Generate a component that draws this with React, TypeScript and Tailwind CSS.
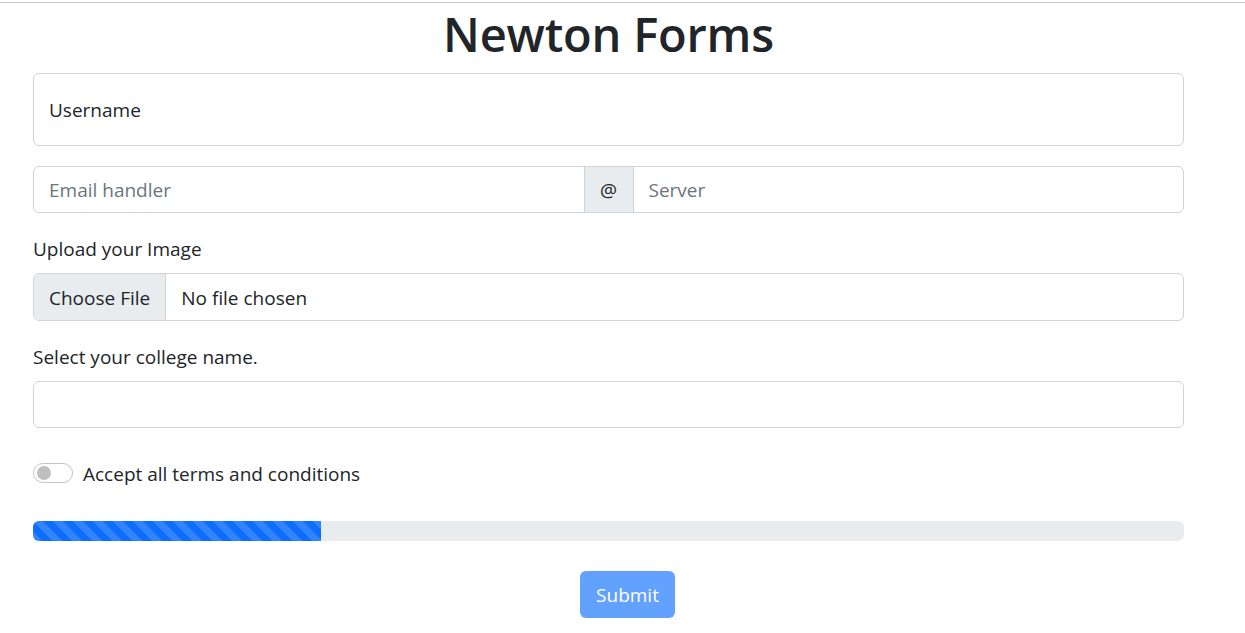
import React from "react";

export default function App() {
  return (
    <div className="min-h-screen bg-white text-[#212529] font-['Open_Sans','Noto_Sans',sans-serif]">
      <div className="pt-[2px]">
        <div className="h-px bg-[#c6c6c6]" />
      </div>
      <div className="ml-[33px] w-[1151px]">
        <h1 className="h-[60px] mb-[10px] pt-[1px] text-center text-[47px] leading-[60px] font-semibold tracking-[-0.2px]">
          Newton Forms
        </h1>

        <div className="h-[73px] mb-[20px] flex items-center rounded-[6px] border border-[#ced4da] px-[15px] pt-[2px] text-[19px]">
          Username
        </div>

        <div className="h-[47px] mb-[20px] flex text-[19px]">
          <div className="flex-1 flex items-center rounded-l-[6px] border border-[#ced4da] px-[15px] pt-[2px] text-[#6c757d]">
            Email handler
          </div>
          <div className="w-[50px] -ml-px flex items-center justify-center border border-[#ced4da] bg-[#e9ecef] pt-[2px] text-[#212529]">
            @
          </div>
          <div className="flex-1 -ml-px flex items-center rounded-r-[6px] border border-[#ced4da] px-[15px] pt-[2px] text-[#6c757d]">
            Server
          </div>
        </div>

        <div className="h-[30px] mb-[10px] flex items-center pt-[2px] text-[19px]">Upload your Image</div>
        <div className="h-[48px] mb-[20px] flex items-stretch rounded-[6px] border border-[#ced4da] overflow-hidden text-[19px]">
          <div className="flex items-center bg-[#e9ecef] border-r border-[#ced4da] px-[15px] pt-[2px]">Choose File</div>
          <div className="flex items-center px-[15px] pt-[2px]">No file chosen</div>
        </div>

        <div className="h-[30px] mb-[10px] flex items-center pt-[2px] text-[19px]">Select your college name.</div>
        <div className="h-[47px] rounded-[6px] border border-[#ced4da]" />

        <div className="mt-[35px] h-[20px] flex items-center gap-[10px] text-[19px]">
          <div className="w-[40px] h-[20px] rounded-full border border-[#c4c4c4] flex items-center pl-[3px]">
            <div className="w-[14px] h-[14px] rounded-full bg-[#bfbfbf]" />
          </div>
          <span className="pt-[2px]">Accept all terms and conditions</span>
        </div>

        <div className="mt-[38px] h-[20px] rounded-[6px] bg-[#e9ecef] overflow-hidden flex">
          <div className="w-1/4 h-full bg-[#0d6efd] bg-[linear-gradient(45deg,rgba(255,255,255,.15)_25%,transparent_25%,transparent_50%,rgba(255,255,255,.15)_50%,rgba(255,255,255,.15)_75%,transparent_75%,transparent)] bg-[length:20px_20px]" />
        </div>

        <div className="mt-[30px] ml-[547px] w-[95px] h-[47px] rounded-[6px] bg-[#62a1fe] pt-[2px] text-white text-[19px] flex items-center justify-center">
          Submit
        </div>
      </div>
    </div>
  );
}
